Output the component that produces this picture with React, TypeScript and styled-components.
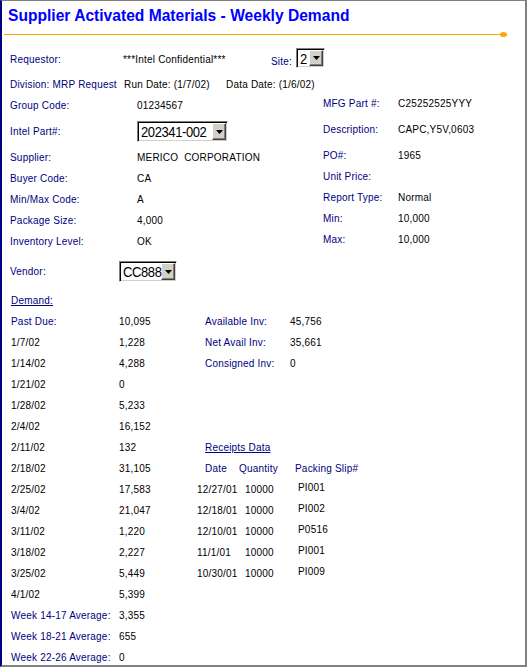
import React, { ReactNode } from "react";
import styled, { createGlobalStyle } from "styled-components";

const NAVY = "#000080";

const GlobalStyle = createGlobalStyle`
  html, body {
    margin: 0;
    padding: 0;
    background: #ffffff;
  }
  body {
    font-family: "Liberation Sans", Arial, sans-serif;
    font-size: 10px;
    color: #000000;
  }
  * {
    box-sizing: border-box;
  }
`;

const Frame = styled.div`
  width: 527px;
  height: 667px;
  overflow: hidden;
  border-top: 1px solid #808080;
  border-left: 2px solid ${NAVY};
  border-right: 2px solid #808080;
  border-bottom: 2px solid #808080;
  letter-spacing: 0.2px;
`;

const Title = styled.h1`
  margin: 0;
  padding: 5px 0 0 6px;
  font-size: 15.6px;
  line-height: 20px;
  font-weight: bold;
  color: #0000ff;
  letter-spacing: 0;
`;

const RuleSvg = styled.svg`
  display: block;
  margin: 4px 0 0 2px;
`;

const Body = styled.div`
  padding-left: 8px;
`;

const Label = styled.span`
  color: ${NAVY};
  white-space: nowrap;
`;

const Value = styled.span`
  color: #000000;
  white-space: nowrap;
`;

const RequestorRow = styled.div`
  display: flex;
  align-items: center;
  height: 22px;
  margin-top: 10px;
`;

const Cell = styled.div<{ $w?: number }>`
  flex: 0 0 ${({ $w }) => ($w ? `${$w}px` : "auto")};
  white-space: nowrap;
`;

const SiteGroup = styled.div`
  align-self: stretch;
  display: flex;
  align-items: flex-end;
  padding-bottom: 2px;
`;

const SiteLabel = styled(Label)`
  width: 25px;
  line-height: 12px;
`;

const DivisionRow = styled.div`
  display: flex;
  align-items: center;
  height: 21px;
  margin-top: 4px;
`;

const InfoGrid = styled.div`
  display: grid;
  grid-template-columns: 127px 186px 75px 1fr;
  grid-template-rows: 21px 31px repeat(5, 21px);
  align-items: center;
`;

const InfoCell = styled.div<{ $right?: boolean }>`
  white-space: nowrap;
  padding-bottom: ${({ $right }) => ($right ? "4px" : "0")};
`;

const VendorRow = styled.div`
  display: flex;
  align-items: center;
  height: 21px;
  margin-top: 9px;
`;

/* classic sunken select */
const SelectBox = styled.div<{ $w: number; $h?: number }>`
  display: flex;
  width: ${({ $w }) => $w}px;
  height: ${({ $h }) => $h ?? 21}px;
  background: #ffffff;
  border: 1px solid;
  border-color: #808080 #ffffff #ffffff #808080;
  box-shadow: inset 1px 1px 0 #000000, inset -1px -1px 0 #d4d0c8;
  padding: 1px;
`;

const SelectText = styled.div`
  flex: 1;
  font-size: 13px;
  line-height: 17px;
  letter-spacing: -0.4px;
  padding-left: 2px;
  color: #000000;
  white-space: nowrap;
  transform: scaleY(1.15);
`;

const SelectButton = styled.div`
  flex: 0 0 14px;
  display: flex;
  align-items: center;
  justify-content: center;
  background: #d4d0c8;
  border: 1px solid;
  border-color: #ffffff #404040 #404040 #ffffff;
  box-shadow: inset -1px -1px 0 #808080;
`;

const Select: React.FC<{ value: string; width: number; height?: number }> = ({ value, width, height }) => (
  <SelectBox $w={width} $h={height}>
    <SelectText>{value}</SelectText>
    <SelectButton>
      <svg width="7" height="4" viewBox="0 0 7 4">
        <polygon points="0,0 7,0 3.5,4" fill="#000" />
      </svg>
    </SelectButton>
  </SelectBox>
);

const DemandList = styled.div`
  margin-top: 8px;
  padding-left: 1px;
`;

const DemandRow = styled.div`
  display: flex;
  align-items: center;
  height: 21px;
`;

const LinkLabel = styled(Label)`
  text-decoration: underline;
`;

const Side = styled.div`
  display: flex;
  align-items: center;
`;

const SideCell = styled.div<{ $w?: number; $pad?: number; $up?: number }>`
  flex: 0 0 ${({ $w }) => ($w ? `${$w}px` : "auto")};
  padding-left: ${({ $pad }) => $pad ?? 0}px;
  padding-bottom: ${({ $up }) => $up ?? 0}px;
  white-space: nowrap;
`;

const info: [string, ReactNode, string, string][] = [
  ["Group Code:", "01234567", "MFG Part #:", "C25252525YYY"],
  ["Intel Part#:", <Select value="202341-002" width={91} />, "Description:", "CAPC,Y5V,0603"],
  ["Supplier:", "MERICO\u00a0 CORPORATION", "PO#:", "1965"],
  ["Buyer Code:", "CA", "Unit Price:", ""],
  ["Min/Max Code:", "A", "Report Type:", "Normal"],
  ["Package Size:", "4,000", "Min:", "10,000"],
  ["Inventory Level:", "OK", "Max:", "10,000"],
];

const demand: [string, string, boolean][] = [
  ["Past Due:", "10,095", true],
  ["1/7/02", "1,228", false],
  ["1/14/02", "4,288", false],
  ["1/21/02", "0", false],
  ["1/28/02", "5,233", false],
  ["2/4/02", "16,152", false],
  ["2/11/02", "132", false],
  ["2/18/02", "31,105", false],
  ["2/25/02", "17,583", false],
  ["3/4/02", "21,047", false],
  ["3/11/02", "1,220", false],
  ["3/18/02", "2,227", false],
  ["3/25/02", "5,449", false],
  ["4/1/02", "5,399", false],
  ["Week 14-17 Average:", "3,355", true],
  ["Week 18-21 Average:", "655", true],
  ["Week 22-26 Average:", "0", true],
];

const inventory: [string, string][] = [
  ["Available Inv:", "45,756"],
  ["Net Avail Inv:", "35,661"],
  ["Consigned Inv:", "0"],
];

const receipts: [string, string, string][] = [
  ["12/27/01", "10000", "PI001"],
  ["12/18/01", "10000", "PI002"],
  ["12/10/01", "10000", "P0516"],
  ["11/1/01", "10000", "PI001"],
  ["10/30/01", "10000", "PI009"],
];

function sideFor(i: number): ReactNode {
  if (i < inventory.length) {
    const [label, value] = inventory[i];
    return (
      <Side>
        <SideCell $w={93} $pad={8}>
          <Label>{label}</Label>
        </SideCell>
        <SideCell>
          <Value>{value}</Value>
        </SideCell>
      </Side>
    );
  }
  if (i === 6) {
    return (
      <Side>
        <SideCell $pad={8}>
          <LinkLabel>Receipts Data</LinkLabel>
        </SideCell>
      </Side>
    );
  }
  if (i === 7) {
    return (
      <Side>
        <SideCell $w={42} $pad={8}>
          <Label>Date</Label>
        </SideCell>
        <SideCell $w={56}>
          <Label>Quantity</Label>
        </SideCell>
        <SideCell>
          <Label>Packing Slip#</Label>
        </SideCell>
      </Side>
    );
  }
  const r = receipts[i - 8];
  if (r) {
    return (
      <Side>
        <SideCell $w={48}>
          <Value>{r[0]}</Value>
        </SideCell>
        <SideCell $w={53}>
          <Value>{r[1]}</Value>
        </SideCell>
        <SideCell $up={4}>
          <Value>{r[2]}</Value>
        </SideCell>
      </Side>
    );
  }
  return null;
}

export default function App() {
  return (
    <>
      <GlobalStyle />
      <Frame>
        <Title>Supplier Activated Materials - Weekly Demand</Title>
        <RuleSvg width="510" height="8" viewBox="0 0 510 8">
          <rect x="0" y="4" width="498" height="1" fill="#ffa500" />
          <ellipse cx="499.5" cy="4.5" rx="3.5" ry="2.5" fill="#ffa500" />
        </RuleSvg>
        <Body>
          <RequestorRow>
            <Cell $w={113}>
              <Label>Requestor:</Label>
            </Cell>
            <Cell $w={148}>
              <Value>***Intel Confidential***</Value>
            </Cell>
            <SiteGroup>
              <SiteLabel>Site:</SiteLabel>
              <Select value="2" width={29} height={20} />
            </SiteGroup>
          </RequestorRow>

          <DivisionRow>
            <Cell $w={114}>
              <Label>Division: MRP Request</Label>
            </Cell>
            <Cell $w={102}>
              <Value>Run Date: (1/7/02)</Value>
            </Cell>
            <Cell>
              <Value>Data Date: (1/6/02)</Value>
            </Cell>
          </DivisionRow>

          <InfoGrid>
            {info.map(([l1, v1, l2, v2]) => (
              <React.Fragment key={l1}>
                <InfoCell>
                  <Label>{l1}</Label>
                </InfoCell>
                <InfoCell>{typeof v1 === "string" ? <Value>{v1}</Value> : v1}</InfoCell>
                <InfoCell $right>
                  <Label>{l2}</Label>
                </InfoCell>
                <InfoCell $right>
                  <Value>{v2}</Value>
                </InfoCell>
              </React.Fragment>
            ))}
          </InfoGrid>

          <VendorRow>
            <Cell $w={109}>
              <Label>Vendor:</Label>
            </Cell>
            <Select value="CC888" width={58} />
          </VendorRow>

          <DemandList>
            <DemandRow>
              <LinkLabel>Demand:</LinkLabel>
            </DemandRow>
            {demand.map(([date, qty, isLabel], i) => (
              <DemandRow key={date}>
                <Cell $w={108}>{isLabel ? <Label>{date}</Label> : <Value>{date}</Value>}</Cell>
                <Cell $w={78}>
                  <Value>{qty}</Value>
                </Cell>
                {sideFor(i)}
              </DemandRow>
            ))}
          </DemandList>
        </Body>
      </Frame>
    </>
  );
}
